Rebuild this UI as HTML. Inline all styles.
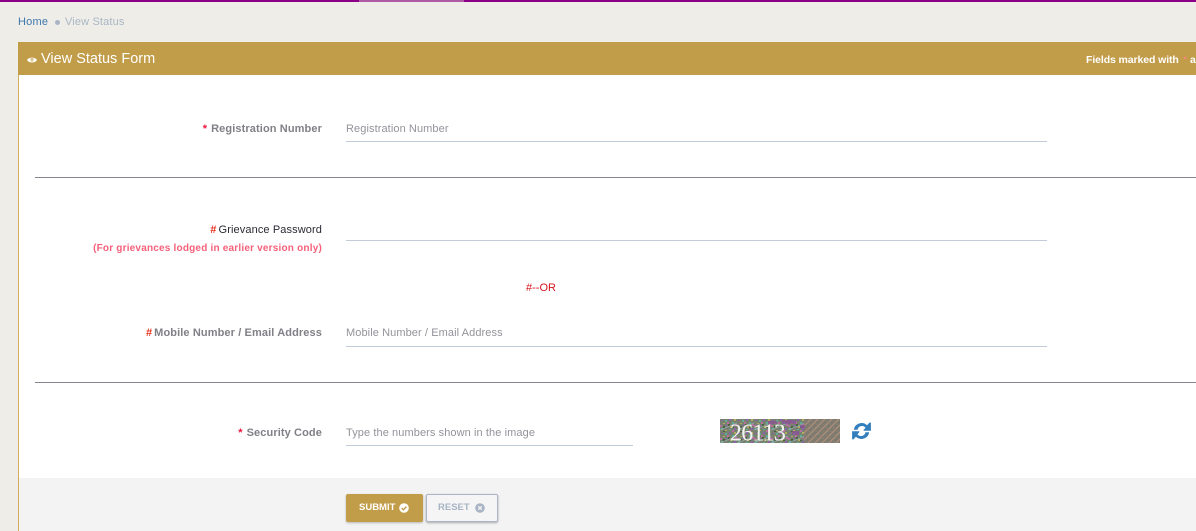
<!DOCTYPE html>
<html>
<head>
<meta charset="utf-8">
<style>
html,body{margin:0;padding:0;}
body{width:1196px;height:531px;overflow:hidden;position:relative;background:#eeede8;font-family:"Liberation Sans",sans-serif;}
.a{position:absolute;white-space:nowrap;}
.lbl{right:874px;font-size:11px;font-weight:bold;color:#808087;line-height:14px;letter-spacing:.11px;}
.ph{left:346px;font-size:11px;color:#93939a;line-height:14px;letter-spacing:.09px;}
.ln{height:1px;background:#c2cbd8;left:346px;}
.hr{height:1px;background:#84848c;left:35px;width:1161px;}
.r{color:#f0143c;}
</style>
</head>
<body>
<div class="a" style="left:0;top:0;width:1196px;height:2px;background:#8b0086;"></div>
<div class="a" style="left:359px;top:0;width:105px;height:2px;background:#b05aa5;"></div>

<div class="a" style="left:18px;top:15px;font-size:11px;line-height:14px;color:#3f77ad;letter-spacing:.2px;">Home</div>
<div class="a" style="left:55px;top:20px;width:5px;height:5px;border-radius:50%;background:#a9b5c4;"></div>
<div class="a" style="left:65px;top:15px;font-size:11px;line-height:14px;color:#a9b7c7;letter-spacing:.15px;">View Status</div>

<div class="a" style="left:18px;top:42px;width:1178px;height:489px;background:#fff;"></div>
<div class="a" style="left:19px;top:478px;width:1177px;height:53px;background:#f3f3f3;"></div>
<div class="a" style="left:18px;top:42px;width:1px;height:489px;background:#d2ae5c;"></div>
<div class="a" style="left:18px;top:42px;width:1178px;height:33px;background:#c29d49;"></div>
<svg class="a" style="left:27px;top:56px;" width="10" height="8" viewBox="0 0 10 8"><path d="M0 4C2 .9 8 .9 10 4C8 7.4 2 7.4 0 4Z" fill="#fff"/><path d="M3.2 3.3Q5 2.3 6.8 3.3" fill="none" stroke="#c29d49" stroke-width=".8"/><circle cx="5" cy="4.6" r="1.2" fill="#d9c89c"/></svg>
<div class="a" style="left:41px;top:50px;font-size:14.5px;line-height:18px;color:#fff;">View Status Form</div>
<div class="a" style="left:1086px;top:53px;font-size:10.5px;font-weight:bold;line-height:14px;color:#fff;letter-spacing:-.1px;">Fields marked with</div>
<div class="a" style="left:1183px;top:53px;font-size:10.5px;font-weight:bold;line-height:14px;color:#ec8c6c;">*</div>
<div class="a" style="left:1190px;top:53px;font-size:10.5px;font-weight:bold;line-height:14px;color:#fff;">a</div>

<div class="a lbl" style="top:122px;"><span class="r" style="margin-right:4px;">*</span>Registration Number</div>
<div class="a ph" style="top:122px;">Registration Number</div>
<div class="a ln" style="top:141px;width:701px;"></div>
<div class="a hr" style="top:177px;"></div>

<div class="a lbl" style="top:223px;font-weight:normal;color:#2a2a33;letter-spacing:.11px;"><span style="color:#e8321e;font-weight:bold;margin-right:2px;">#</span>Grievance Password</div>
<div class="a ln" style="top:240px;width:701px;"></div>
<div class="a lbl" style="top:242px;font-size:10px;color:#f5607a;letter-spacing:.2px;">(For grievances lodged in earlier version only)</div>
<div class="a" style="left:526px;top:281px;font-size:11px;line-height:14px;color:#d8141e;">#--OR</div>

<div class="a lbl" style="top:326px;"><span style="color:#e8321e;margin-right:2px;">#</span>Mobile Number / Email Address</div>
<div class="a ph" style="top:326px;">Mobile Number / Email Address</div>
<div class="a ln" style="top:346px;width:701px;"></div>
<div class="a hr" style="top:382px;"></div>

<div class="a lbl" style="top:426px;"><span class="r" style="margin-right:4px;">*</span>Security Code</div>
<div class="a ph" style="top:426px;">Type the numbers shown in the image</div>
<div class="a ln" style="top:445px;width:287px;"></div>

<svg class="a" style="left:720px;top:419px;" width="120" height="24" viewBox="0 0 120 24">
<defs>
<pattern id="h" width="7" height="7" patternUnits="userSpaceOnUse"><rect width="7" height="7" fill="#7d7a70"/><path d="M0 7L7 0M-2 2L2-2M5 9L9 5" stroke="#b0907c" stroke-width="1.3"/><path d="M0 0L7 7" stroke="#8f8270" stroke-width=".8"/></pattern>
<pattern id="n" width="17" height="13" patternUnits="userSpaceOnUse"><rect width="17" height="13" fill="#78806f"/>
<path d="M1 1h2v1H1zM9 0h2v2H9zM5 6h2v1H5zM14 9h2v2h-2z" fill="#8a62ac"/>
<path d="M5 1h2v2H5zM12 3h2v2h-2zM1 9h2v2H1zM9 10h2v1H9z" fill="#5fae96"/>
<path d="M14 0h2v2h-2zM3 4h2v1H3zM10 7h2v2h-2zM5 11h2v1H5z" fill="#b4aa60"/>
<path d="M0 6h2v2H0zM7 3h2v2H7zM12 11h2v2h-2zM15 5h2v2h-2z" fill="#ba6ea2"/>
<path d="M3 7h2v2H3zM8 5h2v2H8zM12 8h2v1h-2zM3 12h2v1H3z" fill="#46603a"/>
<path d="M0 11L17 4" stroke="#96aab2" stroke-width=".7"/></pattern>
</defs>
<rect width="120" height="24" fill="url(#h)"/>
<rect width="84" height="24" fill="url(#n)"/>
<path d="M62 1h14v4H62zM48 2h9v3h-9zM72 12h7v4h-7zM80 6h5v3h-5z" fill="#8d4f9a" opacity=".75"/>
<text x="10" y="21.5" font-family="'Liberation Serif',serif" font-size="24" fill="#f2f3ef" letter-spacing="-.8">26113</text>
</svg>
<svg class="a" style="left:852px;top:421px;" width="19" height="20" viewBox="0 0 19 20">
<path d="M1.8 8.8A7.9 7.9 0 0 1 15 4.2L17 2.2A.5.5 0 0 1 18.9 2.8V9.8H12C11.5 9.8 11.4 9.2 11.8 8.8L13.5 6.8A4.4 4.4 0 0 0 5.6 8.8Z" fill="#337fbd"/>
<path d="M17.2 11.2A7.9 7.9 0 0 1 4 15.8L2 17.8A.5.5 0 0 1 .1 17.2V10.2H7C7.5 10.2 7.6 10.8 7.2 11.2L5.5 13.2A4.4 4.4 0 0 0 13.4 11.2Z" fill="#337fbd"/>
</svg>

<div class="a" style="left:346px;top:494px;width:77px;height:28px;background:#c29d49;border-radius:2px;box-shadow:0 1px 2px rgba(0,0,0,.25);"></div>
<div class="a" style="left:359px;top:501px;font-size:9.5px;font-weight:bold;line-height:14px;color:#fff;">SUBMIT</div>
<svg class="a" style="left:399px;top:503px;" width="10" height="10" viewBox="0 0 10 10"><circle cx="5" cy="5" r="4.8" fill="#fff"/><path d="M2.7 5.1L4.4 6.8L7.4 3.6" fill="none" stroke="#c29d49" stroke-width="1.4"/></svg>
<div class="a" style="left:426px;top:494px;width:70px;height:26px;background:#f5f5f6;border:1px solid #aab5c6;border-radius:2px;box-shadow:0 1px 2px rgba(0,0,0,.3);"></div>
<div class="a" style="left:438px;top:501px;font-size:9.5px;font-weight:bold;line-height:14px;color:#a8b4c4;">RESET</div>
<svg class="a" style="left:475px;top:503px;" width="10" height="10" viewBox="0 0 10 10"><circle cx="5" cy="5" r="4.8" fill="#a8b4c4"/><path d="M3.2 3.2L6.8 6.8M6.8 3.2L3.2 6.8" stroke="#f5f5f6" stroke-width="1.3"/></svg>
</body>
</html>
